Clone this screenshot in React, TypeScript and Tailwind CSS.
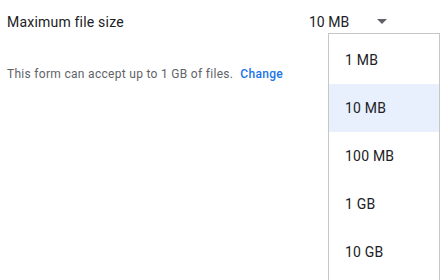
const options = ["1 MB", "10 MB", "100 MB", "1 GB", "10 GB"];

function SizeMenu({ selected }: { selected: string }) {
  return (
    <div className="absolute left-[328px] top-[33px] w-[112px] h-[260px] overflow-hidden bg-white border border-[#c6c6c6] pt-[2px]">
      {options.map((o) => (
        <div
          key={o}
          className={
            "h-[48px] flex items-center pl-[16px] text-[14px] text-[#202124] tracking-[0.2px] " +
            (o === selected ? "bg-[#e8f0fe]" : "")
          }
        >
          {o}
        </div>
      ))}
    </div>
  );
}

export default function App() {
  return (
    <div
      className="relative w-[443px] h-[280px] overflow-hidden bg-white"
      style={{ fontFamily: "Roboto, 'Liberation Sans', sans-serif" }}
    >
      <div className="flex items-center h-[22px] mt-[11px] pl-[7px]">
        <span className="w-[302px] text-[14px] tracking-[0.2px] text-[#202124]">Maximum file size</span>
        <span className="text-[14px] text-[#202124]">10 MB</span>
        <svg className="ml-[28px] -mt-[2px]" width="10" height="5" viewBox="0 0 10 5">
          <path d="M0 0h10L5 5z" fill="#5f6368" />
        </svg>
      </div>
      <div className="flex items-center mt-[32px] pl-[7px] text-[12px] tracking-[0.3px]">
        <span className="text-[#5f6368]">This form can accept up to 1 GB of files.</span>
        <span className="ml-[7px] text-[#1a73e8] font-medium">Change</span>
      </div>
      <SizeMenu selected="10 MB" />
    </div>
  );
}
